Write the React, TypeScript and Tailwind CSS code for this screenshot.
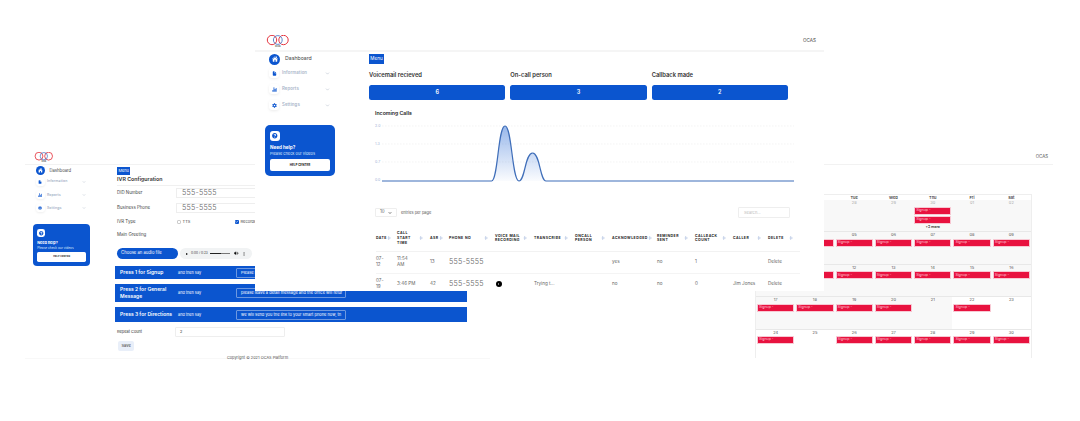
import { Check, ChevronDown, ChevronsUpDown, EllipsisVertical, Volume2 } from 'lucide-react';
import { IoDocument, IoHome, IoSettingsSharp, IoStatsChart } from 'react-icons/io5';
import { FaQuestionCircle } from 'react-icons/fa';

const BLUE = 'bg-[#0b55cf]';

function Logo({ className }: { className: string }) {
  return (
    <svg viewBox="0 0 24 12" className={className} fill="none">
      <circle cx="6" cy="5" r="4.7" stroke="#e5343f" strokeWidth="1" />
      <circle cx="17.5" cy="5" r="4.7" stroke="#e5343f" strokeWidth="1" />
      <circle cx="11.8" cy="5" r="4.4" stroke="#4a78c8" strokeWidth="0.9" />
      <text x="11.8" y="11.7" textAnchor="middle" fontSize="1.9" fontWeight="700" fill="#444">
        OCAS
      </text>
    </svg>
  );
}

const navItems = [
  { label: 'Information', Icon: IoDocument },
  { label: 'Reports', Icon: IoStatsChart },
  { label: 'Settings', Icon: IoSettingsSharp },
];

function Sidebar() {
  return (
    <div className="w-[113px] shrink-0 pt-[1px]">
      <div className="flex h-[12px] items-center gap-[5px] pl-[14px]">
        <div className={`flex h-[11px] w-[11px] items-center justify-center rounded-full ${BLUE}`}>
          <IoHome className="h-[6px] w-[6px] text-white" />
        </div>
        <span className="text-[5.2px] text-[#444]">Dashboard</span>
      </div>
      {navItems.map(({ label, Icon }) => (
        <div key={label} className="flex h-[16px] items-center pl-[14px]">
          <div className="flex h-[10px] w-[10px] items-center justify-center rounded-[3px] bg-white shadow-[0_1px_3px_rgba(0,0,0,0.08)]">
            <Icon className="h-[5px] w-[5px] text-[#0b55cf]" />
          </div>
          <span className="ml-[3px] w-[43px] text-[4.3px] font-semibold tracking-[0.1px] text-[#a9b5c9]">{label}</span>
          <ChevronDown className="h-[5px] w-[5px] text-[#9aa5b8]" />
        </div>
      ))}
      <div className={`ml-[10px] mt-[12px] h-[51px] w-[70px] rounded-[5px] px-[5px] pt-[6px] ${BLUE}`}>
        <div className="flex h-[10px] w-[10px] items-center justify-center rounded-[3px] bg-white">
          <FaQuestionCircle className="h-[5.5px] w-[5.5px] text-[#0b55cf]" />
        </div>
        <div className="mt-[3px] text-[4.6px] font-bold leading-[7px] text-white">Need help?</div>
        <div className="text-[3.9px] leading-[6px] text-[#dce7fb]">Please check our videos</div>
        <div className="mt-[2px] flex h-[12px] w-[60px] items-center justify-center rounded-[2px] bg-white text-[3px] font-bold text-[#222]">
          HELP CENTER
        </div>
      </div>
    </div>
  );
}

function MenuButton({ className }: { className: string }) {
  return <div className={`flex items-center justify-center text-white ${BLUE} ${className}`}>Menu</div>;
}

function AudioPlayer() {
  return (
    <div className="ml-[2px] flex h-[11px] w-[72px] items-center rounded-full bg-[#f1f3f4] pl-[6px] text-[#333]">
      <div className="h-0 w-0 border-y-[1.6px] border-l-[2.4px] border-y-transparent border-l-black" />
      <span className="ml-[3px] w-[19px] text-[3.2px]">0:00 / 0:23</span>
      <div className="h-[1px] w-[20px] bg-[#777]">
        <div className="h-[1px] w-[11px] bg-[#222]" />
      </div>
      <Volume2 className="ml-[4px] h-[4.5px] w-[4.5px] fill-black" />
      <EllipsisVertical className="ml-[3px] h-[4px] w-[4px]" />
    </div>
  );
}

const pressRows = [
  { label: 'Press 1 for Signup', say: 'Please leave your name and number after the tone', height: 'h-[13px] mt-[7px]' },
  { label: 'Press 2 for General Message', say: 'please leave a detail message and the office will retur', height: 'h-[18px] mt-[5px]' },
  { label: 'Press 3 for Directions', say: 'we will send you the link to your smart phone now, th', height: 'h-[15px] mt-[5px]' },
];

function FormRow({ label, value }: { label: string; value: string }) {
  return (
    <div className="flex h-[10px] items-center text-[4.4px] text-[#444]">
      <span className="w-[59px]">{label}</span>
      <div className="flex h-[10px] w-[200px] items-center border border-[#eee] pl-[5px] text-[7.2px] font-light tracking-[0.2px] text-[#666]">
        {value}
      </div>
    </div>
  );
}

function IvrWindow() {
  return (
    <div className="absolute left-[25px] top-[150px] flex h-[210px] w-[465px] flex-col overflow-hidden bg-white">
      <div className="flex h-[15px] shrink-0 items-center border-b border-[#f2f2f2] pl-[9px]">
        <Logo className="h-[10px] w-[20px]" />
      </div>
      <div className="flex h-[190px] shrink-0">
        <div className="w-[113px] shrink-0 [zoom:0.815]">
          <Sidebar />
        </div>
        <div className="w-[352px] pt-[2px]">
          <MenuButton className="h-[8px] w-[13px] text-[3.8px]" />
          <div className="mt-[1px] border-b border-[#f0f0f0] pb-[2px] text-[5.3px] font-semibold leading-[7px] text-[#333]">
            IVR Configuration
          </div>
          <div className="mt-[2px]">
            <FormRow label="DID Number" value="555-5555" />
          </div>
          <div className="mt-[5px]">
            <FormRow label="Business Phone" value="555-5555" />
          </div>
          <div className="mt-[4px] flex h-[10px] items-center text-[4.4px] text-[#444]">
            <span className="w-[59.5px]">IVR Type</span>
            <div className="h-[4px] w-[4px] rounded-[1px] border border-[#ccc]" />
            <span className="ml-[2px] w-[52px] text-[4px]">TTS</span>
            <div className="flex h-[4px] w-[4px] items-center justify-center rounded-[1px] bg-[#0b55cf]">
              <Check className="h-[3.5px] w-[3.5px] text-white" strokeWidth={4} />
            </div>
            <span className="ml-[2px] text-[4px]">Recorded</span>
          </div>
          <div className="mt-[4px] flex h-[8px] items-center text-[4.4px] text-[#444]">Main Greeting</div>
          <div className="mt-[9px] flex h-[11px] items-center">
            <div className={`flex h-[11px] w-[61px] items-center rounded-full pl-[4px] text-[4.2px] text-white ${BLUE}`}>
              Choose an audio file
            </div>
            <AudioPlayer />
          </div>
          {pressRows.map((row) => (
            <div key={row.label} className={`-ml-[2px] flex w-[352px] items-center pl-[5px] text-white ${BLUE} ${row.height}`}>
              <div className="w-[58px] text-[5px] font-semibold leading-[7px]">{row.label}</div>
              <div className="w-[58px] text-[3.8px]">and then say</div>
              <div className="flex h-[10px] w-[110px] items-center overflow-hidden whitespace-nowrap rounded-[1px] border border-[#6d98e0] pl-[4px] text-[4px]">
                {row.say}
              </div>
            </div>
          ))}
          <div className="mt-[5px] flex h-[10px] items-center text-[3.9px] text-[#333]">
            <span className="w-[58px]">Repeat Count</span>
            <div className="flex h-[10px] w-[110px] items-center rounded-[1px] border border-[#eee] pl-[4px]">2</div>
          </div>
          <div className="ml-[1px] mt-[4px] flex h-[10px] w-[16px] items-center justify-center rounded-[2px] bg-[#e9eff9] text-[4px] text-[#333]">
            Save
          </div>
        </div>
      </div>
      <div className="mt-[3px] h-[1px] shrink-0 bg-[#f8f8f8]" />
      <div className="-mt-[4px] shrink-0 text-center text-[3.9px] leading-[6px] text-[#555]">Copyright © 2021 OCAS Platform</div>
    </div>
  );
}

const stats = [
  { title: 'Voicemail recieved', value: 6 },
  { title: 'On-call person', value: 3 },
  { title: 'Callback made', value: 2 },
];

function CallsChart() {
  return (
    <svg viewBox="0 0 427 66" className="ml-[1px] mt-[4px] block h-[66px] w-[427px]">
      <defs>
        <linearGradient id="callsFill" x1="0" y1="0" x2="0" y2="1">
          <stop offset="0" stopColor="#0b55cf" stopOpacity="0.42" />
          <stop offset="1" stopColor="#0b55cf" stopOpacity="0.02" />
        </linearGradient>
      </defs>
      {[
        ['2.0', 5],
        ['1.3', 23],
        ['0.7', 41],
      ].map(([label, y]) => (
        <g key={label}>
          <text x="5" y={Number(y) + 1.2} fontSize="3.6" fill="#9fb2d6">{label}</text>
          <line x1="12" x2="424" y1={y} y2={y} stroke="#ececec" strokeWidth="0.6" strokeDasharray="1.5 1.5" />
        </g>
      ))}
      <text x="5" y="60" fontSize="3.6" fill="#9fb2d6">0.0</text>
      <path d="M121.6 60 C128 60 128 5 135 5 C142 5 142 60 149 60 C155 60 155 32 162.6 32 C170 32 170 60 176 60 Z" fill="url(#callsFill)" />
      <path d="M12 60 L121.6 60 C128 60 128 5 135 5 C142 5 142 60 149 60 C155 60 155 32 162.6 32 C170 32 170 60 176 60 L424 60" fill="none" stroke="#3f6eb9" strokeWidth="1.2" />
    </svg>
  );
}

const columns = [
  { label: 'DATE', width: 'w-[21px]', labelWidth: 'w-auto' },
  { label: 'CALL START TIME', width: 'w-[33px]', labelWidth: 'w-[14px]' },
  { label: 'ASR', width: 'w-[19px]', labelWidth: 'w-auto' },
  { label: 'PHONE NO', width: 'w-[46px]', labelWidth: 'w-auto' },
  { label: 'VOICE MAIL RECORDING', width: 'w-[39px]', labelWidth: 'w-[26px]' },
  { label: 'TRANSCRIBE', width: 'w-[41px]', labelWidth: 'w-auto' },
  { label: 'ONCALL PERSON', width: 'w-[37px]', labelWidth: 'w-[20px]' },
  { label: 'ACKNOWLEDGED', width: 'w-[45px]', labelWidth: 'w-auto' },
  { label: 'REMINDER SENT', width: 'w-[38px]', labelWidth: 'w-[24px]' },
  { label: 'CALLBACK COUNT', width: 'w-[38px]', labelWidth: 'w-[24px]' },
  { label: 'CALLER', width: 'w-[35px]', labelWidth: 'w-auto' },
  { label: 'DELETE', width: 'w-[32px]', labelWidth: 'w-auto' },
];

const callRows = [
  { date: '07-12', time: '11:54 AM', asr: '13', play: false, transcribe: '', ack: 'yes', sent: 'no', count: '1', caller: '' },
  { date: '07-19', time: '3:46 PM', asr: '42', play: true, transcribe: 'Trying t...', ack: 'no', sent: 'no', count: '0', caller: 'Jim Jones' },
];

function CallsTable() {
  return (
    <table className="w-[424px] table-fixed border-collapse text-left">
      <colgroup>
        {columns.map((c) => (
          <col key={c.label} className={c.width} />
        ))}
      </colgroup>
      <thead>
        <tr className="h-[25px] border-b border-[#f2f2f2]">
          {columns.map((c) => (
            <th key={c.label} className="p-0 text-[3.5px] font-bold leading-[4.6px] tracking-[0.45px] text-[#222]">
              <div className="flex items-center justify-between pr-[7px]">
                <span className={c.labelWidth}>{c.label}</span>
                <ChevronsUpDown className="h-[4px] w-[4px] shrink-0 text-[#5f80c0]" strokeWidth={3} />
              </div>
            </th>
          ))}
        </tr>
      </thead>
      <tbody>
        {callRows.map((r) => (
          <tr key={r.date} className="h-[22px] border-b border-[#f4f4f4] text-[4.6px] leading-[6.5px] text-[#666]">
            <td className="p-0 pr-[10px]">{r.date}</td>
            <td className="p-0 pr-[14px]">{r.time}</td>
            <td className="p-0">{r.asr}</td>
            <td className="p-0 text-[7.2px] font-light tracking-[0.2px]">555-5555</td>
            <td className="p-0 pl-[0.5px]">
              {r.play && (
                <div className="flex h-[6px] w-[6px] items-center justify-center rounded-full bg-black">
                  <div className="h-0 w-0 border-y-[1.2px] border-l-[1.8px] border-y-transparent border-l-white" />
                </div>
              )}
            </td>
            <td className="p-0">{r.transcribe}</td>
            <td className="p-0" />
            <td className="p-0">{r.ack}</td>
            <td className="p-0">{r.sent}</td>
            <td className="p-0">{r.count}</td>
            <td className="p-0">{r.caller}</td>
            <td className="p-0">Delete</td>
          </tr>
        ))}
      </tbody>
    </table>
  );
}

function DashboardWindow() {
  return (
    <div className="absolute left-[255px] top-[30px] h-[261px] w-[569px] overflow-hidden bg-white">
      <div className="flex h-[22px] items-center justify-between border-b-2 border-[#f5f5f5] pl-[11px] pr-[8px] pt-[2px]">
        <Logo className="h-[12px] w-[24px]" />
        <span className="text-[4.6px] text-[#444]">OCAS</span>
      </div>
      <div className="flex">
        <div className="w-[114px] shrink-0">
          <Sidebar />
        </div>
        <div className="w-[419px] pt-[2px]">
          <MenuButton className="h-[10px] w-[15px] text-[4.6px]" />
          <div className="mt-[7px] grid grid-cols-3 gap-x-[5px]">
            {stats.map((s) => (
              <div key={s.title}>
                <div className="text-[5.8px] font-semibold leading-[8px] text-[#333]">{s.title}</div>
                <div className={`mt-[6px] flex h-[15px] items-center justify-center rounded-[2.5px] text-[5.5px] font-semibold text-white ${BLUE}`}>
                  {s.value}
                </div>
              </div>
            ))}
          </div>
          <div className="ml-[6px] mt-[9px] text-[5.2px] font-semibold leading-[8px] text-[#222]">Incoming Calls</div>
          <CallsChart />
          <div className="ml-[6px] mt-[20px] flex h-[11px] w-[415px] items-center">
            <div className="flex h-[9px] w-[22px] items-center justify-between rounded-[1px] border border-[#eee] px-[4px] text-[4.4px] text-[#555]">
              10
              <ChevronDown className="h-[4px] w-[4px] text-[#333]" strokeWidth={4} />
            </div>
            <span className="ml-[4px] text-[3.9px] text-[#555]">entries per page</span>
            <div className="ml-auto flex h-[11px] w-[52px] items-center rounded-[1px] border border-[#eee] pl-[5px] text-[4px] text-[#bbb]">
              Search...
            </div>
          </div>
          <div className="ml-[7px] mt-[8px]">
            <CallsTable />
          </div>
        </div>
      </div>
    </div>
  );
}

const calendarDays = [
  [['', ''], ['', ''], ['28', ''], ['29', ''], ['30', 'events'], ['01', ''], ['02', '']],
  [['03', ''], ['04', 'e'], ['05', 'e'], ['06', 'e'], ['07', 'e'], ['08', 'e'], ['09', 'e']],
  [['10', ''], ['11', 'e'], ['12', 'e'], ['13', 'e'], ['14', 'e'], ['15', 'e'], ['16', 'e']],
  [['17', 'e'], ['18', 'e'], ['19', 'e'], ['20', 'e'], ['21', ''], ['22', 'e'], ['23', '']],
  [['24', 'e'], ['25', ''], ['26', 'e'], ['27', 'e'], ['28', 'e'], ['29', 'e'], ['30', 'e']],
];

function CalendarEvent() {
  return (
    <div className="mx-[1px] mb-[1px] flex h-[8px] items-center overflow-hidden rounded-[1px] border border-[#f8c8d3] bg-[#e8123f] pl-[1px] text-[3.6px] text-[#ffc9d6]">
      Signup -
    </div>
  );
}

function CalendarWindow() {
  return (
    <div className="absolute left-[755px] top-[150px] h-[208px] w-[298px] overflow-hidden">
      <div className="flex h-[15px] items-center justify-end border-b border-[#f2f2f2] pr-[5px] text-[4.4px] text-[#555]">OCAS</div>
      <div className="mt-[29px] w-[277px] border-x border-[#eee]">
        <div className="grid h-[6px] grid-cols-7 border-t border-[#eee] text-center text-[4px] font-semibold leading-[6px] text-[#444]">
          {['Sun', 'Mon', 'Tue', 'Wed', 'Thu', 'Fri', 'Sat'].map((d) => (
            <div key={d}>{d}</div>
          ))}
        </div>
        {calendarDays.map((week, w) => (
          <div key={w} className="grid h-[32.4px] grid-cols-7 border-b border-[#e8e8e8]">
            {week.map(([day, kind], i) => {
              const upcoming = w === 4 || (w === 3 && i >= 5);
              return (
                <div key={i} className={upcoming ? 'bg-white' : 'bg-[#f8f8f8]'}>
                  <div className={`h-[6.5px] text-center text-[4px] leading-[6.5px] ${w === 0 ? 'text-[#aaa]' : 'text-[#555]'}`}>{day}</div>
                  {kind === 'e' && <CalendarEvent />}
                  {kind === 'events' && (
                    <>
                      <CalendarEvent />
                      <CalendarEvent />
                      <div className="text-center text-[3.6px] font-semibold leading-[5px] text-[#333]">+2 more</div>
                    </>
                  )}
                </div>
              );
            })}
          </div>
        ))}
      </div>
    </div>
  );
}

export default function App() {
  return (
    <div className="relative h-[421px] w-[1080px] overflow-hidden bg-white font-['Inter',sans-serif]">
      <IvrWindow />
      <CalendarWindow />
      <DashboardWindow />
    </div>
  );
}
